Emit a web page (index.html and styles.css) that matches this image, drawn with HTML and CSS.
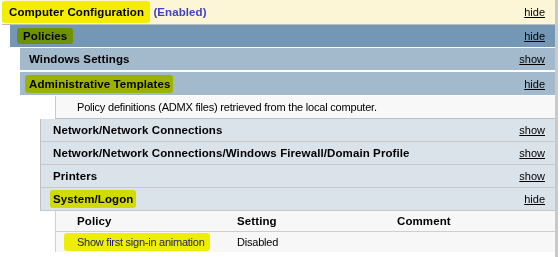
FILE: index.html
```html
<!DOCTYPE html>
<html lang="en">
<head>
    <meta charset="UTF-8">
    <title>Group Policy Report</title>
    <link rel="stylesheet" href="styles.css">
</head>
<body>
    <div class="report">
        <div class="row head-root">
            <span class="title"><span class="mark mark-root">Computer Configuration</span> <span class="state">(Enabled)</span></span>
            <a class="toggle">hide</a>
        </div>
        <div class="lvl1">
            <div class="row head-1">
                <span class="title"><span class="mark mark-policies">Policies</span></span>
                <a class="toggle">hide</a>
            </div>
            <div class="lvl2">
                <div class="row head-2">
                    <span class="title">Windows Settings</span>
                    <a class="toggle">show</a>
                </div>
                <div class="row head-2 gap">
                    <span class="title"><span class="mark mark-admin">Administrative Templates</span></span>
                    <a class="toggle">hide</a>
                </div>
                <div class="lvl3">
                    <div class="row desc">Policy definitions (ADMX files) retrieved from the local computer.</div>
                    <div class="row head-3">
                        <span class="title">Network/Network Connections</span>
                        <a class="toggle">show</a>
                    </div>
                    <div class="row head-3">
                        <span class="title">Network/Network Connections/Windows Firewall/Domain Profile</span>
                        <a class="toggle">show</a>
                    </div>
                    <div class="row head-3">
                        <span class="title">Printers</span>
                        <a class="toggle">show</a>
                    </div>
                    <div class="row head-3">
                        <span class="title"><span class="mark mark-logon">System/Logon</span></span>
                        <a class="toggle">hide</a>
                    </div>
                    <div class="settings">
                        <div class="setting-row setting-head">
                            <span class="col-policy">Policy</span>
                            <span class="col-setting">Setting</span>
                            <span class="col-comment">Comment</span>
                        </div>
                        <div class="setting-row">
                            <span class="col-policy"><span class="mark mark-item"><a class="policy-link">Show first sign-in animation</a></span></span>
                            <span class="col-setting">Disabled</span>
                            <span class="col-comment"></span>
                        </div>
                    </div>
                </div>
            </div>
        </div>
    </div>
</body>
</html>
```

FILE: styles.css
```css
body {
    margin: 0;
    background-color: #ffffff;
    font-family: "Liberation Sans", Arial, sans-serif;
    font-size: 11px;
    letter-spacing: -0.2px;
    color: #000;
}
.report {
    width: 553px;
    padding-left: 2px;
    border-right: 3px solid #c9c9c9;
    padding-bottom: 5px;
}
.row {
    display: flex;
    align-items: center;
    justify-content: space-between;
    height: 22px;
    padding: 0 10px 0 9px;
    border-bottom: 1px solid #c8c8c8;
}
.title {
    font-size: 11.5px;
    font-weight: bold;
    letter-spacing: 0.1px;
    white-space: nowrap;
}
.toggle {
    color: #000;
    letter-spacing: 0;
    text-decoration: underline;
}
.head-root {
    height: 24px;
    padding-left: 7px;
    background-color: #fdf6d6;
    border-bottom: 1px solid #bdbdbd;
}
.state {
    color: #4040c0;
}
.lvl1 {
    margin-left: 8px;
}
.head-1 {
    background-color: #7397b5;
    border-bottom: 1px solid #ffffff;
}
.lvl2 {
    margin-left: 10px;
}
.head-2 {
    background-color: #a3b9cc;
    border-bottom: 1px solid #ffffff;
}
.head-2.gap {
    border-top: 1px solid #ffffff;
    height: 23px;
}
.lvl3 {
    margin-left: 20px;
}
.desc {
    margin-left: 15px;
    padding-left: 21px;
    background-color: #f8f8f8;
    border-left: 1px solid #c8c8c8;
    border-bottom: 1px solid #c0c0c0;
    justify-content: flex-start;
}
.head-3 {
    background-color: #dae3ea;
    border-left: 1px solid #c0c0c0;
    padding-left: 12px;
}
.settings {
    margin-left: 15px;
    background-color: #f7f7f7;
    border-left: 1px solid #d0d0d0;
}
.setting-row {
    display: flex;
    align-items: center;
    height: 20px;
    padding-left: 21px;
    border-bottom: 1px solid #cfcfcf;
}
.setting-row:last-child {
    border-bottom: none;
}
.setting-head {
    font-size: 11.5px;
    font-weight: bold;
    letter-spacing: 0.1px;
}
.col-policy {
    width: 160px;
}
.col-setting {
    width: 160px;
}
.policy-link {
    color: #1c1c6c;
    letter-spacing: -0.25px;
}
.mark {
    background-color: #f6f600;
    mix-blend-mode: multiply;
    border-radius: 3px;
}
.mark-root {
    padding: 5px 6px 5px 7px;
    margin-left: -7px;
}
.mark-policies {
    padding: 2px 6px;
    margin-left: -2px;
}
.mark-admin {
    padding: 3px 2px 3px 4px;
    margin-left: -4px;
}
.mark-logon {
    padding: 3px 3px;
    margin-left: -3px;
}
.mark-item {
    padding: 3px 5px;
    margin-left: -13px;
    padding-left: 13px;
}
```
